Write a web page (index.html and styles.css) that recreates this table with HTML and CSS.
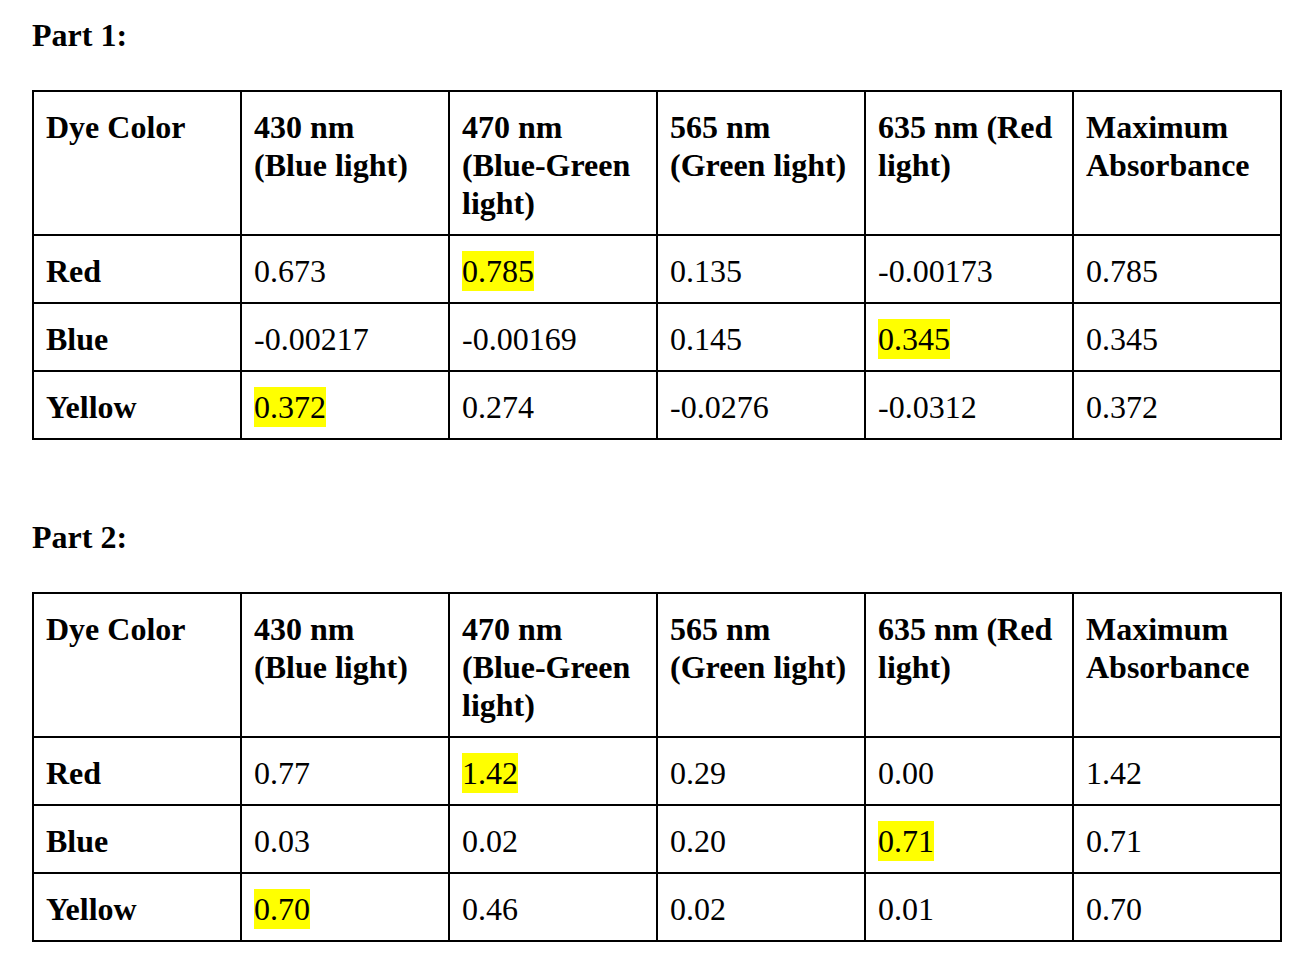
FILE: index.html
```html
<!DOCTYPE html>
<html lang="en">
<head>
    <meta charset="UTF-8">
    <meta name="viewport" content="width=device-width, initial-scale=1.0">
    <title>Dye Absorbance</title>
    <link rel="stylesheet" href="styles.css">
</head>
<body>
    <div class="page">
        <p class="part-title">Part 1:</p>

        <table class="data-table">
            <tr class="head-row">
                <th>Dye Color</th>
                <th>430 nm<br>(Blue light)</th>
                <th>470 nm (Blue-Green light)</th>
                <th>565 nm (Green light)</th>
                <th>635 nm (Red light)</th>
                <th>Maximum Absorbance</th>
            </tr>
            <tr>
                <th>Red</th>
                <td>0.673</td>
                <td><span class="hl">0.785</span></td>
                <td>0.135</td>
                <td>-0.00173</td>
                <td>0.785</td>
            </tr>
            <tr>
                <th>Blue</th>
                <td>-0.00217</td>
                <td>-0.00169</td>
                <td>0.145</td>
                <td><span class="hl">0.345</span></td>
                <td>0.345</td>
            </tr>
            <tr>
                <th>Yellow</th>
                <td><span class="hl">0.372</span></td>
                <td>0.274</td>
                <td>-0.0276</td>
                <td>-0.0312</td>
                <td>0.372</td>
            </tr>
        </table>

        <p class="part-title second">Part 2:</p>

        <table class="data-table">
            <tr class="head-row">
                <th>Dye Color</th>
                <th>430 nm<br>(Blue light)</th>
                <th>470 nm (Blue-Green light)</th>
                <th>565 nm (Green light)</th>
                <th>635 nm (Red light)</th>
                <th>Maximum Absorbance</th>
            </tr>
            <tr>
                <th>Red</th>
                <td>0.77</td>
                <td><span class="hl">1.42</span></td>
                <td>0.29</td>
                <td>0.00</td>
                <td>1.42</td>
            </tr>
            <tr>
                <th>Blue</th>
                <td>0.03</td>
                <td>0.02</td>
                <td>0.20</td>
                <td><span class="hl">0.71</span></td>
                <td>0.71</td>
            </tr>
            <tr>
                <th>Yellow</th>
                <td><span class="hl">0.70</span></td>
                <td>0.46</td>
                <td>0.02</td>
                <td>0.01</td>
                <td>0.70</td>
            </tr>
        </table>
    </div>
</body>
</html>
```

FILE: styles.css
```css
* {
    margin: 0;
    padding: 0;
    box-sizing: border-box;
}

body {
    font-family: "Liberation Serif", "Times New Roman", serif;
    font-size: 32px;
    color: #000;
    background-color: #fff;
}

.page {
    padding: 16px 0 0 32px;
}

.part-title {
    font-weight: bold;
    line-height: 39px;
}

.part-title.second {
    margin-top: 78px;
}

.data-table {
    margin-top: 35px;
    width: 1250px;
    table-layout: fixed;
    border-collapse: collapse;
}

.data-table th,
.data-table td {
    border: 2px solid #000;
    padding: 16px 12px 12px;
    line-height: 38px;
    text-align: left;
    vertical-align: top;
}

.data-table th {
    font-weight: bold;
}

.data-table td {
    font-weight: normal;
}

.hl {
    background-color: #ffff00;
    padding: 2px 0;
}
```
